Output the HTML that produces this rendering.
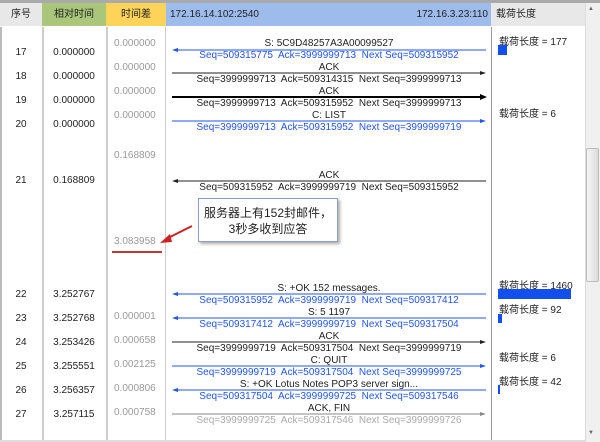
<!DOCTYPE html><html><head><meta charset="utf-8"><style>
body{margin:0;width:600px;height:442px;background:#fff;overflow:hidden;font-family:"Liberation Sans","Noto Sans CJK SC",sans-serif;font-size:10px;color:#222;position:relative}
.a{position:absolute;white-space:nowrap}
.c{text-align:center}
.h{position:absolute;top:3px;height:23px;line-height:23px}
.g{color:#999}
.b{color:#2255ee}
</style></head><body>
<div style="position:absolute;left:0;top:0;width:600px;height:3px;background:#aaa"></div>
<div class="h c" style="left:0;width:42px;background:#e8e8e8">序号</div>
<div class="h c" style="left:42px;width:64px;background:#a9c67a">相对时间</div>
<div class="h c" style="left:106px;width:60px;background:#fdd35a">时间差</div>
<div class="h" style="left:166px;width:325px;background:#9dbcec"><span style="position:absolute;left:4px">172.16.14.102:2540</span><span style="position:absolute;right:3px">172.16.3.23:110</span></div>
<div class="h" style="left:491px;width:94px;background:#e8e8e8;padding-left:5px;box-sizing:border-box">载荷长度</div>
<div style="position:absolute;left:585px;top:3px;width:15px;height:439px;background:#f0f0f0;border-left:1px solid #ddd"></div>
<div class="a" style="left:588px;top:6px;font-size:6px;color:#666">▲</div>
<div class="a" style="left:588px;top:430px;font-size:6px;color:#666">▼</div>
<div style="position:absolute;left:586px;top:148px;width:11px;height:132px;background:linear-gradient(90deg,#f4f4f4,#dcdcdc);border:1px solid #bbb;border-radius:2px"></div>
<div style="position:absolute;left:0;top:27px;width:2px;height:415px;background:#bbb"></div>
<div style="position:absolute;left:42px;top:27px;width:2px;height:415px;background:#ccc"></div>
<div style="position:absolute;left:106px;top:27px;width:2px;height:415px;background:#ccc"></div>
<div style="position:absolute;left:165px;top:27px;width:1px;height:415px;background:#ccc"></div>
<div style="position:absolute;left:491px;top:27px;width:1px;height:415px;background:#999"></div>
<div style="position:absolute;left:0;top:440px;width:585px;height:2px;background:#ddd"></div>

<div class="a c" style="left:0;width:42px;top:41px;line-height:24px">17<br>18<br>19<br>20</div>
<div class="a c" style="left:42px;width:64px;top:41px;line-height:24px">0.000000<br>0.000000<br>0.000000<br>0.000000</div>
<div class="a c" style="left:0;width:42px;top:175px">21</div>
<div class="a c" style="left:42px;width:64px;top:175px">0.168809</div>
<div class="a c" style="left:0;width:42px;top:283px;line-height:24px">22<br>23<br>24<br>25<br>26<br>27</div>
<div class="a c" style="left:42px;width:64px;top:283px;line-height:24px">3.252767<br>3.252768<br>3.253426<br>3.255551<br>3.256357<br>3.257115</div>
<div class="a g" style="left:114px;top:32px;line-height:24px">0.000000<br>0.000000<br>0.000000<br>0.000000</div>
<div class="a g" style="left:114px;top:150px">0.168809</div>
<div class="a g" style="left:114px;top:236px">3.083958</div>
<div class="a g" style="left:114px;top:305px;line-height:24px">0.000001<br>0.000658<br>0.002125<br>0.000806<br>0.000758</div>
<div style="position:absolute;left:112px;top:251px;width:50px;height:2px;background:#c33"></div>
<svg class="a" style="left:150px;top:222px" width="46" height="26"><line x1="42" y1="4" x2="16" y2="17" stroke="#c22" stroke-width="2"/><polygon points="10,21 20,12 22,20" fill="#c22"/></svg>
<div class="a c" style="left:198px;top:198px;width:140px;height:44px;border:1px solid #8aa0c8;background:#fff;box-shadow:2px 2px 3px #aaa;font-size:12px;line-height:16px;padding-top:6px;box-sizing:border-box">服务器上有152封邮件，<br>3秒多收到应答</div>

<svg class="a" style="left:0;top:0" width="600" height="442">
<g stroke-width="1">
<line x1="175" y1="50" x2="486" y2="50" stroke="#2255ee"/><polygon points="172,50 178,48 178,52" fill="#2255ee"/>
<line x1="172" y1="73" x2="482" y2="73" stroke="#222"/><polygon points="486,73 480,71 480,75" fill="#222"/>
<line x1="172" y1="97" x2="482" y2="97" stroke="#000" stroke-width="2"/><polygon points="487,97 480,94 480,100" fill="#000"/>
<line x1="172" y1="121" x2="482" y2="121" stroke="#2255ee"/><polygon points="486,121 480,119 480,123" fill="#2255ee"/>
<line x1="175" y1="181" x2="486" y2="181" stroke="#222"/><polygon points="172,181 178,179 178,183" fill="#222"/>
<line x1="175" y1="294" x2="486" y2="294" stroke="#2255ee"/><polygon points="172,294 178,292 178,296" fill="#2255ee"/>
<line x1="175" y1="318" x2="486" y2="318" stroke="#2255ee"/><polygon points="172,318 178,316 178,320" fill="#2255ee"/>
<line x1="172" y1="342" x2="482" y2="342" stroke="#222"/><polygon points="486,342 480,340 480,344" fill="#222"/>
<line x1="172" y1="366" x2="482" y2="366" stroke="#2255ee"/><polygon points="486,366 480,364 480,368" fill="#2255ee"/>
<line x1="175" y1="390" x2="486" y2="390" stroke="#2255ee"/><polygon points="172,390 178,388 178,392" fill="#2255ee"/>
<line x1="172" y1="414" x2="482" y2="414" stroke="#888"/><polygon points="486,414 480,412 480,416" fill="#888"/>
</g></svg>
<div class="a c" style="left:172px;width:314px;top:38px;line-height:12px">S: 5C9D48257A3A00099527<br><span class="b">Seq=509315775&nbsp; Ack=3999999713&nbsp; Next Seq=509315952</span></div>
<div class="a c" style="left:172px;width:314px;top:62px;line-height:12px">ACK<br>Seq=3999999713&nbsp; Ack=509314315&nbsp; Next Seq=3999999713</div>
<div class="a c" style="left:172px;width:314px;top:86px;line-height:12px">ACK<br>Seq=3999999713&nbsp; Ack=509315952&nbsp; Next Seq=3999999713</div>
<div class="a c" style="left:172px;width:314px;top:110px;line-height:12px">C: LIST<br><span class="b">Seq=3999999713&nbsp; Ack=509315952&nbsp; Next Seq=3999999719</span></div>
<div class="a c" style="left:172px;width:314px;top:170px;line-height:12px">ACK<br>Seq=509315952&nbsp; Ack=3999999719&nbsp; Next Seq=509315952</div>
<div class="a c" style="left:172px;width:314px;top:283px;line-height:12px">S: +OK 152 messages.<br><span class="b">Seq=509315952&nbsp; Ack=3999999719&nbsp; Next Seq=509317412</span></div>
<div class="a c" style="left:172px;width:314px;top:307px;line-height:12px">S: 5 1197<br><span class="b">Seq=509317412&nbsp; Ack=3999999719&nbsp; Next Seq=509317504</span></div>
<div class="a c" style="left:172px;width:314px;top:331px;line-height:12px">ACK<br>Seq=3999999719&nbsp; Ack=509317504&nbsp; Next Seq=3999999719</div>
<div class="a c" style="left:172px;width:314px;top:355px;line-height:12px">C: QUIT<br><span class="b">Seq=3999999719&nbsp; Ack=509317504&nbsp; Next Seq=3999999725</span></div>
<div class="a c" style="left:172px;width:314px;top:379px;line-height:12px">S: +OK Lotus Notes POP3 server sign...<br><span class="b">Seq=509317504&nbsp; Ack=3999999725&nbsp; Next Seq=509317546</span></div>
<div class="a c" style="left:172px;width:314px;top:403px;line-height:12px">ACK, FIN<br><span style="color:#aaa">Seq=3999999725&nbsp; Ack=509317546&nbsp; Next Seq=3999999726</span></div>

<div class="a" style="left:499px;top:33px">载荷长度 = 177</div>
<div style="position:absolute;left:498px;top:45px;width:9px;height:10px;background:#1150ee"></div>
<div class="a" style="left:499px;top:105px">载荷长度 = 6</div>
<div class="a" style="left:499px;top:277px">载荷长度 = 1460</div>
<div style="position:absolute;left:498px;top:289px;width:73px;height:10px;background:#1150ee"></div>
<div class="a" style="left:499px;top:301px">载荷长度 = 92</div>
<div style="position:absolute;left:498px;top:314px;width:4px;height:9px;background:#1150ee"></div>
<div class="a" style="left:499px;top:349px">载荷长度 = 6</div>
<div class="a" style="left:499px;top:373px">载荷长度 = 42</div>
<div style="position:absolute;left:498px;top:385px;width:2px;height:9px;background:#1150ee"></div>
</body></html>
